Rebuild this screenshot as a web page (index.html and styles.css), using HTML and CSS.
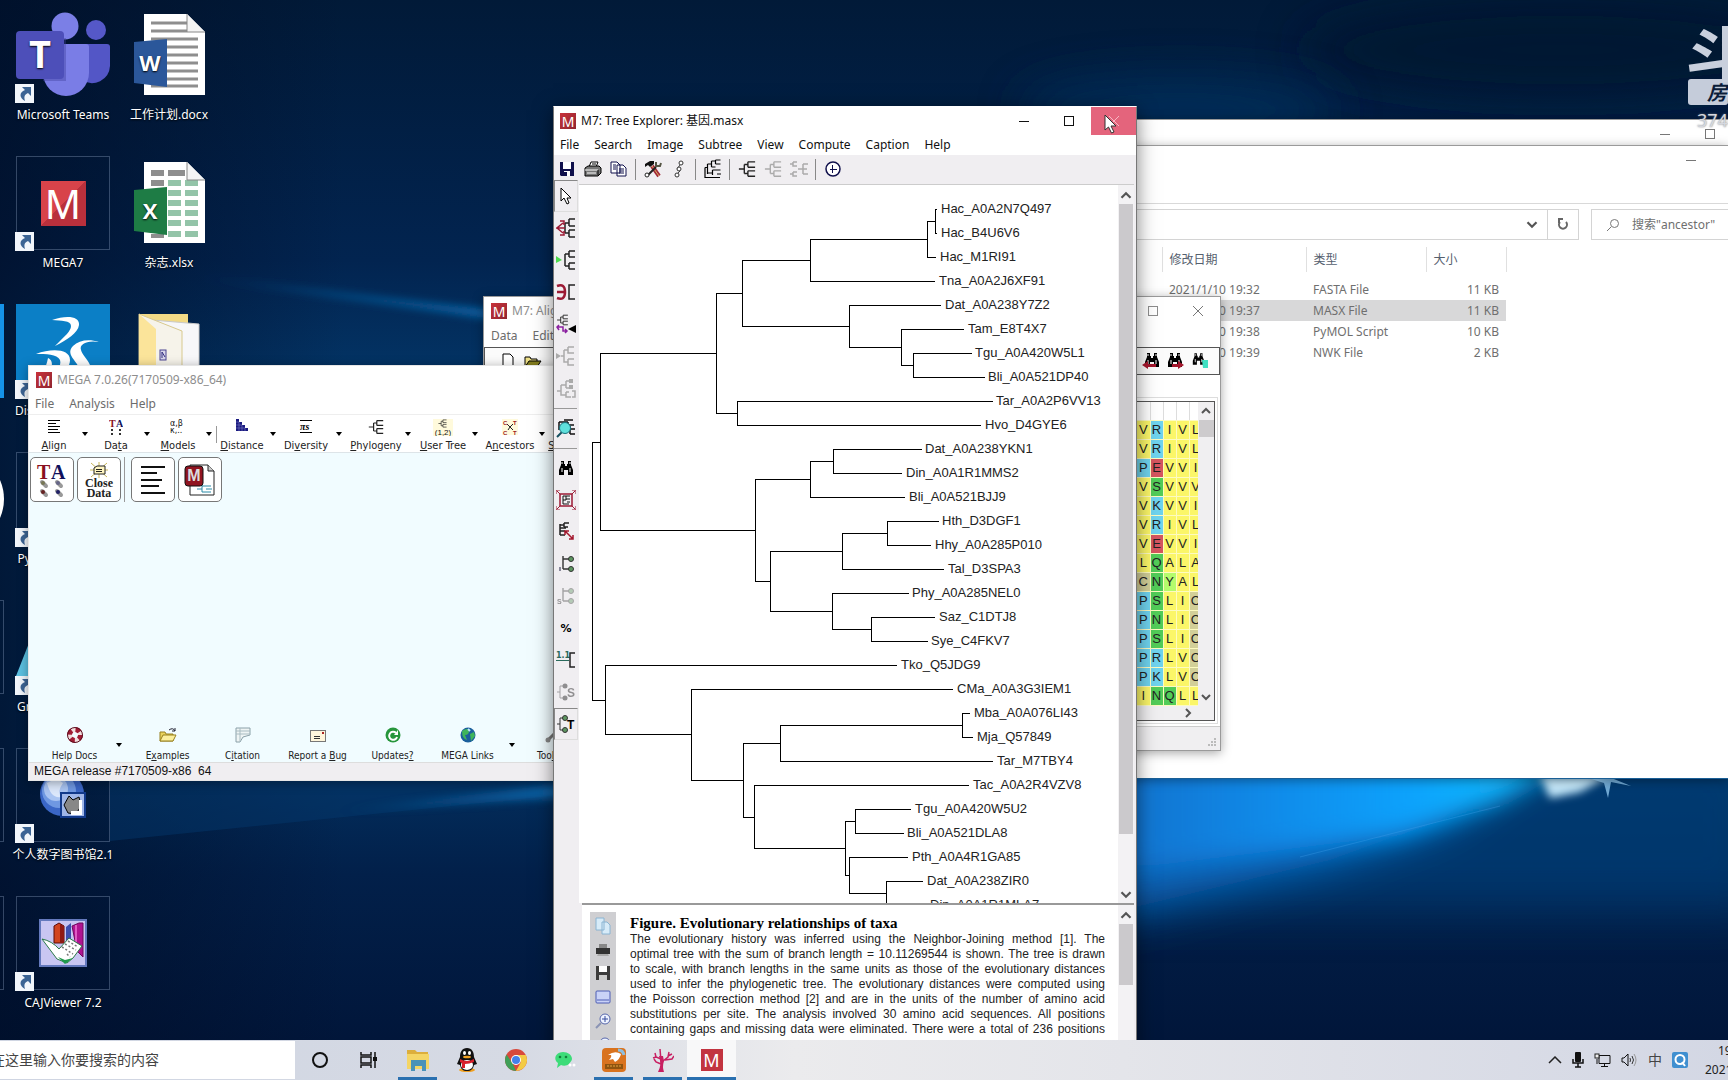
FILE: index.html
```html
<!DOCTYPE html>
<html lang="zh-CN">
<head>
  <meta charset="UTF-8">
  <title>Desktop</title>
  <meta name="viewport" content="width=device-width, initial-scale=1">
  <link rel="stylesheet" href="styles.css">
</head>
<body>

  <!-- shared icons -->
  <svg class="sprite" aria-hidden="true">
    <symbol id="shortcut" viewBox="0 0 19 19"><rect width="19" height="19" fill="#f2f6fb"/><path d="M7 3h9v9l-3-3c-4 2-4 4-3 8-6-3-6-9 0-11z" fill="#3c6494"/></symbol>
    <symbol id="tree" viewBox="0 0 20 20"><path d="M1 10h6M7 5v10M7 5h4M7 15h4M11 2v6M11 2h8M11 8h8M11 12v6M11 12h8M11 18h8" fill="none" stroke="currentColor" stroke-width="1.5"/></symbol>
    <symbol id="binoc" viewBox="0 0 16 16"><path d="M3 1h3v3h1v2h2V4h1V1h3v4l2 5v5h-5v-5H6v5H1v-5l2-5z" fill="#000"/><path d="M4 2v2M12 2v2M4 8v4M12 8v4" stroke="#fff"/></symbol>
    <symbol id="nodes" viewBox="0 0 20 20"><path d="M7 2v8M7 5h6M7 15h6M7 5v10" fill="none" stroke="#333" stroke-width="1.4"/><circle cx="15" cy="5" r="2.5" fill="#5d9660" stroke="#333"/><circle cx="15" cy="15" r="2.5" fill="#5d9660" stroke="#333"/></symbol>
    <symbol id="caret" viewBox="0 0 6 4"><path d="M0 0h6L3 4z" fill="#000"/></symbol>
    <symbol id="up" viewBox="0 0 10 8"><path d="M1 6l4-4 4 4" fill="none" stroke="#555" stroke-width="2"/></symbol>
    <symbol id="down" viewBox="0 0 10 8"><path d="M1 2l4 4 4-4" fill="none" stroke="#555" stroke-width="2"/></symbol>
    <symbol id="right" viewBox="0 0 8 10"><path d="M2 1l4 4-4 4" fill="none" stroke="#555" stroke-width="2"/></symbol>
  </svg>

  <main class="desktop">
    <svg class="wallpaper" viewBox="0 0 1728 1040" preserveAspectRatio="xMaxYMid slice" aria-hidden="true">
      <defs>
        <linearGradient id="sky" x1="0" y1="0" x2="0" y2="1">
          <stop offset="0" stop-color="#011a38"/><stop offset=".25" stop-color="#022450"/><stop offset=".36" stop-color="#033465"/>
          <stop offset=".72" stop-color="#033262"/><stop offset=".84" stop-color="#02204a"/><stop offset="1" stop-color="#01163a"/>
        </linearGradient>
        <linearGradient id="edge" x1="0" x2="1"><stop offset="0" stop-color="#000d26" stop-opacity=".7"/><stop offset=".2" stop-color="#000d26" stop-opacity="0"/></linearGradient>
        <linearGradient id="ray" x1="0" x2="1"><stop offset="0" stop-color="#0b5c9c" stop-opacity="0"/><stop offset=".4" stop-color="#0b5c9c" stop-opacity=".8"/><stop offset="1" stop-color="#1379c4"/></linearGradient>
        <linearGradient id="beam" x1="0" x2="1"><stop offset="0" stop-color="#075aa6"/><stop offset=".5" stop-color="#0b74d2"/><stop offset="1" stop-color="#0c8df0"/></linearGradient>
        <linearGradient id="core" x1="0" x2="1"><stop offset="0" stop-color="#0f86ea" stop-opacity=".4"/><stop offset=".6" stop-color="#10a2fc"/><stop offset="1" stop-color="#14ccff"/></linearGradient>
        <filter id="soft" x="-20%" y="-100%" width="140%" height="300%"><feGaussianBlur stdDeviation="24"/></filter>
        <filter id="mist" x="-20%" y="-100%" width="140%" height="300%"><feGaussianBlur stdDeviation="13"/></filter>
        <filter id="glow" x="-20%" y="-100%" width="140%" height="300%"><feGaussianBlur stdDeviation="4"/></filter>
      </defs>
      <rect width="1728" height="1040" fill="url(#sky)"/>
      <rect width="1728" height="1040" fill="url(#edge)"/>
      <ellipse cx="1560" cy="50" rx="260" ry="50" fill="#01142f" opacity=".7" filter="url(#soft)"/>
      <ellipse cx="1180" cy="110" rx="160" ry="30" fill="#03305e" opacity=".8" filter="url(#soft)"/>
      <path d="M180 275L560 318v10z" fill="url(#ray)" filter="url(#glow)"/>
      <path d="M110 841L560 795V700H110z" fill="#043a6e" opacity=".45"/>
      <path d="M330 812L560 784v14z" fill="url(#ray)" opacity=".7" filter="url(#glow)"/>
      <rect x="1100" y="740" width="660" height="170" fill="#05407a" opacity=".7" filter="url(#soft)"/>
      <path d="M1000 700H1600L1440 820L1330 860L1000 940z" fill="url(#beam)" filter="url(#soft)"/>
      <path d="M1120 740H1600L1500 800L1400 835L1120 870z" fill="url(#core)" filter="url(#mist)"/>
      <path d="M1540 775H1610L1580 792L1550 798z" fill="#c4e8fa" filter="url(#glow)"/>
      <path d="M1585 777h24l22 9-20-4-3 16-4-15z" fill="#9fd8ff" opacity=".7"/>
      <path d="M1300 857L1500 806" stroke="#4aa6f0" opacity=".3"/>
    </svg>

    <section class="icons">
      <div class="icon"></div>
      <div class="icon">
        <svg class="tile" viewBox="0 0 94 94">
          <circle cx="80" cy="22" r="10" fill="#5558c8"/><path d="M66 36h25q3 0 3 3v19a18 18 0 0 1-28 14z" fill="#5356c6"/>
          <circle cx="49" cy="18" r="13.5" fill="#7b7fe6"/><path d="M27 36h43q3 0 3 3v26a23 23 0 0 1-46 0z" fill="#7a7de6"/>
          <path d="M48 30v41H27" fill="none" stroke="#3f3f9c" stroke-width="4" opacity=".4"/><rect y="23" width="48" height="48" rx="4" fill="#4d4fb9"/>
          <text x="24" y="60" class="t-teams">T</text>
        </svg>
        <svg class="short"><use href="#shortcut"/></svg>
        <span>Microsoft Teams</span>
      </div>
      <div class="icon">
        <svg class="tile" viewBox="0 0 94 94">
          <path d="M22 6h43l18 18v63H22z" fill="#fff"/>
          <path d="M29 15h36M29 23h36M29 31h47M29 39h47M29 47h47M29 55h47M29 63h47M29 71h47M29 78h47" stroke="#8e8e8e" stroke-width="3"/>
          <path d="M65 6v18h18" fill="#f4f4f4" stroke="#888"/>
          <path d="M12 34l33-3v48l-33-4z" fill="#2b579a"/><text x="28" y="63" class="t-office">W</text>
        </svg>
        <span>工作计划.docx</span>
      </div>

      <div class="icon"></div>
      <div class="icon">
        <div class="tile framed"><b class="m-logo big">M</b></div>
        <svg class="short"><use href="#shortcut"/></svg>
        <span>MEGA7</span>
      </div>
      <div class="icon">
        <svg class="tile" viewBox="0 0 94 94">
          <path d="M22 6h43l18 18v63H22z" fill="#fff"/>
          <path d="M29 17h13M46 17h17M29 27h13" stroke="#8e8e8e" stroke-width="6"/>
          <path d="M46 27h13M63 27h13M46 37h13M63 37h13M46 47h13M63 47h13M46 57h13M63 57h13M46 67h13M63 67h13M46 78h13M63 78h13" stroke="#93c4a8" stroke-width="6"/>
          <path d="M65 6v18h18" fill="#f4f4f4" stroke="#888"/>
          <path d="M29 80h13" stroke="#8e8e8e" stroke-width="4"/>
          <path d="M12 34l33-3v48l-33-4z" fill="#1e7c45"/><text x="28" y="63" class="t-office">X</text>
        </svg>
        <span>杂志.xlsx</span>
      </div>

      <div class="icon"><div class="tile sky"></div></div>
      <div class="icon">
        <svg class="tile" viewBox="0 0 94 94">
          <rect width="94" height="94" fill="#0b7fc6"/>
          <path d="M36 16c14-5 28-4 27 5-1 8-12 15-24 21 10-10 16-15 16-20 0-6-10-5-19-6z" fill="#fff"/>
          <path d="M83 38c-12-2-20 2-18 8 2 8 16 16 6 24-7 6-18 8-24 6 10-2 18-6 16-12-2-7-14-14-6-22 6-6 16-7 26-4z" fill="#fff"/>
          <path d="M20 50c16-6 34-5 34 6 0 12-18 22-36 24 8-8 12-16 14-26 8 4 2 14-2 20 10-4 16-12 14-18-3-6-14-6-24-6z" fill="#fff"/>
        </svg>
        <svg class="short"><use href="#shortcut"/></svg>
        <span>Discovery Studi...</span>
      </div>
      <div class="icon">
        <svg class="tile" viewBox="0 0 94 94">
          <path d="M17 10h49v84H17z" fill="#f2da86"/><path d="M30 16l47 4v74H36z" fill="#f7f7f9" stroke="#c9c9c9"/>
          <path d="M17 10l43 17v67H17z" fill="#f6f3ea" stroke="#d8c98e"/><path d="M17 10l17 15v69H17z" fill="#fbe49a"/>
          <rect x="38" y="46" width="6" height="10" fill="#d8d6ea" stroke="#4a4590"/><path d="M40 54v-6l3 5" fill="none" stroke="#332e80"/>
        </svg>
      </div>

      <div class="icon"><div class="tile disc"></div></div>
      <div class="icon"><div class="tile framed"></div><svg class="short"><use href="#shortcut"/></svg><span>PyMOL Viewer 2</span></div>
      <div class="icon"></div>

      <div class="icon"><div class="tile framed"></div></div>
      <div class="icon">
        <svg class="tile" viewBox="0 0 94 94"><path d="M0 76L26 10l20 66z" fill="#5cc0e0"/></svg>
        <svg class="short"><use href="#shortcut"/></svg>
        <span>GraphPad Prism</span>
      </div>
      <div class="icon"></div>

      <div class="icon"><div class="tile framed"></div></div>
      <div class="icon">
        <div class="tile framed">
          <svg width="48" height="48" viewBox="0 0 48 48">
            <circle cx="23" cy="23" r="22" fill="#3a66c6"/><circle cx="20" cy="20" r="17" fill="#6f98e2"/><circle cx="17" cy="18" r="12" fill="#a9c4f2"/><path d="M8 12q10-6 16 0-6 8-2 14-10 2-14-14z" fill="#dce8fb"/>
            <rect x="22" y="22" width="24" height="24" fill="#9fb6e8" stroke="#123a8c" stroke-width="2"/>
            <path d="M25 34l5-9 4 4 6-3 2 9-5 8-8-1z" fill="#888" stroke="#000"/><path d="M40 29h3v15H32v-4h8z" fill="#fff"/>
          </svg>
        </div>
        <svg class="short"><use href="#shortcut"/></svg>
        <span>个人数字图书馆2.1</span>
      </div>
      <div class="icon"></div>

      <div class="icon"><div class="tile framed"></div></div>
      <div class="icon">
        <div class="tile framed">
          <svg width="48" height="48" viewBox="0 0 48 48">
            <rect x="1" y="1" width="46" height="46" fill="#c9c6f2" stroke="#6479bd" stroke-width="2"/>
            <path d="M15 7l5-3 5 3v17H15z" fill="#d2451f" stroke="#5a0c08"/><path d="M21 5l4 2v17h-4z" fill="#8f1a14"/>
            <path d="M27 8l5-4v22h-5z" fill="#3c4fb0"/><path d="M33 7l7-3h4v34l-6-6z" fill="#b01391" stroke="#700a5c"/><path d="M37 6v26" stroke="#e05cc4" stroke-width="2"/>
            <path d="M3 20q10 2 17 10l10-11 13 8-9 12-6 5-10-4z" fill="#fff" stroke="#2a7a48"/>
            <path d="M23 28l11 7M26 25l11 6M29 22l10 6M28 35l3 3" stroke="#777" stroke-width="1.5" stroke-dasharray="2 2"/>
            <path d="M19 38l7 3 8-2-8 6z" fill="#1f9a4c"/>
          </svg>
        </div>
        <svg class="short"><use href="#shortcut"/></svg>
        <span>CAJViewer 7.2</span>
      </div>
    </section>

    <!-- file explorer, two windows stacked -->
    <section class="window explorer-back">
      <div class="captions"><button aria-label="最小化"><i class="min"></i></button><button aria-label="最大化"><i class="max"></i></button></div>
    </section>

    <section class="window explorer">
      <div class="captions"><button aria-label="最小化"><i class="min"></i></button></div>
      <div class="address-row">
        <div class="address">
          <button aria-label="历史"><svg width="12" height="9"><use href="#down"/></svg></button>
          <button class="refresh" aria-label="刷新"><svg width="14" height="14" viewBox="0 0 14 14"><path d="M10 4a4 4 0 1 1-6 0M7 1H3v4" fill="none" stroke="#666" stroke-width="2"/></svg></button>
        </div>
        <label class="find">
          <svg width="14" height="14" viewBox="0 0 14 14"><circle cx="8.5" cy="5.5" r="4" fill="none" stroke="#777"/><path d="M5 9l-4 4" stroke="#777"/></svg>
          <input type="text" aria-label="搜索" placeholder='搜索"ancestor"'>
        </label>
      </div>
      <table class="files">
        <thead><tr><th class="c-name"></th><th class="c-date">修改日期</th><th class="c-type">类型</th><th class="c-size">大小</th></tr></thead>
        <tbody>
          <tr><td></td><td>2021/1/10 19:32</td><td>FASTA File</td><td>11 KB</td></tr>
          <tr class="selected"><td></td><td>2021/1/10 19:37</td><td>MASX File</td><td>11 KB</td></tr>
          <tr><td></td><td>2021/1/10 19:38</td><td>PyMOL Script</td><td>10 KB</td></tr>
          <tr><td></td><td>2021/1/10 19:39</td><td>NWK File</td><td>2 KB</td></tr>
        </tbody>
      </table>
    </section>

    <!-- alignment explorer -->
    <section class="window align">
      <header class="title muted">
        <b class="m-logo">M</b><span>M7: Alignment Explorer</span>
        <div class="captions"><button aria-label="Maximize"><i class="max"></i></button><button aria-label="Close"><svg width="12" height="12" viewBox="0 0 12 12"><path d="M1 1l10 10M11 1L1 11" stroke="#777"/></svg></button></div>
      </header>
      <nav class="menu muted"><button>Data</button><button>Edit</button></nav>
      <div class="align-tools">
        <svg width="16" height="16" viewBox="0 0 16 16"><path d="M3 1h7l3 3v11H3z" fill="#fff" stroke="#000"/></svg>
        <svg width="18" height="16" viewBox="0 0 18 16"><path d="M1 14V4h5l1 2h6v3" fill="#f3e58a" stroke="#000"/><path d="M1 14l4-6h12l-4 6z" fill="#8a8420" stroke="#000"/></svg>
        <div class="finders">
          <svg width="18" height="18" viewBox="0 0 18 18"><use href="#binoc" width="16" height="16" x="2"/><path d="M0 13l6-4v3h8v3H6v2z" fill="#a3162c"/></svg>
          <svg width="18" height="18" viewBox="0 0 18 18"><use href="#binoc" width="16" height="16"/><path d="M17 13l-6-4v3H5v3h6v2z" fill="#a3162c"/></svg>
          <svg width="18" height="18" viewBox="0 0 18 18"><use href="#binoc" width="13" height="14"/><path d="M10 8h6v8h-5z" fill="#3fe0c2"/></svg>
        </div>
      </div>
      <div class="grid-frame">
        <div class="grid-box">
          <table class="residues" id="residues"></table>
          <div class="vscroll"><svg width="10" height="8"><use href="#up"/></svg><i class="thumb"></i><svg width="10" height="8"><use href="#down"/></svg></div>
          <div class="hscroll"><svg width="8" height="10"><use href="#right"/></svg></div>
        </div>
      </div>
      <footer class="align-status"><svg width="9" height="9" viewBox="0 0 9 9"><path d="M6 1h2M3 4h2M6 4h2M0 7h2M3 7h2M6 7h2" stroke="#bbb" stroke-width="2"/></svg></footer>
    </section>

    <!-- MEGA main window -->
    <section class="window mega">
      <header class="title muted"><b class="m-logo">M</b><span>MEGA 7.0.26(7170509-x86_64)</span></header>
      <nav class="menu muted"><button>File</button><button>Analysis</button><button>Help</button></nav>
      <div class="mega-tools">
        <button class="tool"><svg width="14" height="14" viewBox="0 0 14 14"><path d="M1 1.5h12M1 4.5h8M1 7.5h12M1 10.5h10M1 13.5h12" stroke="#000"/></svg><span><u>A</u>lign</span></button>
        <svg class="drop"><use href="#caret"/></svg>
        <button class="tool"><svg width="14" height="16" viewBox="0 0 14 16"><text x="0" y="8" class="t-base red">T</text><text x="7" y="8" class="t-base navy">A</text><path d="M3 10v2M3 14v2M11 10v2M11 14v2" stroke="#333" stroke-width="2"/></svg><span>Da<u>t</u>a</span></button>
        <svg class="drop"><use href="#caret"/></svg>
        <button class="tool"><svg width="16" height="16" viewBox="0 0 16 16"><text x="0" y="7" class="t-greek">α,β</text><text x="0" y="14" class="t-greek">κ,..</text></svg><span><u>M</u>odels</span></button>
        <svg class="drop"><use href="#caret"/></svg>
        <i class="sep"></i>
        <button class="tool"><svg width="12" height="12" viewBox="0 0 12 12"><path d="M0 0h3v3h3v3h3v3h3v3H0z" fill="#1b1b80"/><path d="M0 3h3M0 6h6M0 9h9M3 3v9M6 6v6M9 9v3" stroke="#8888cc" stroke-width=".5"/></svg><span><u>D</u>istance</span></button>
        <svg class="drop"><use href="#caret"/></svg>
        <button class="tool mid"><svg width="14" height="14" viewBox="0 0 14 14"><path d="M1 1.5h12M1 13.5h12" stroke="#000"/><text x="1" y="11" class="t-pi">πs</text></svg><span>Di<u>v</u>ersity</span></button>
        <svg class="drop"><use href="#caret"/></svg>
        <button class="tool wide"><svg width="16" height="16"><use href="#tree"/></svg><span><u>P</u>hylogeny</span></button>
        <svg class="drop near"><use href="#caret"/></svg>
        <button class="tool wide pale"><svg width="20" height="17" viewBox="0 0 20 17"><use href="#tree" x="3" width="13" height="9"/><text x="10" y="16" class="t-pair">(1,2)</text></svg><span><u>U</u>ser Tree</span></button>
        <svg class="drop near"><use href="#caret"/></svg>
        <button class="tool wide pale"><svg width="16" height="16" viewBox="0 0 16 16"><path d="M5 5l3 3 3-3M8 8l-2 3M8 8l3 3" fill="none" stroke="#222"/><text x="1" y="6" class="t-tiny">C</text><text x="11" y="6" class="t-tiny">T</text><text x="1" y="16" class="t-tiny">C</text><text x="11" y="16" class="t-tiny">T</text></svg><span>A<u>n</u>cestors</span></button>
        <svg class="drop near"><use href="#caret"/></svg>
        <button class="tool"><span><u>S</u>election</span></button>
      </div>
      <div class="mega-body">
        <div class="cards">
          <button class="card" aria-label="Data explorer"><svg width="34" height="36" viewBox="0 0 34 36"><text x="2" y="17" class="t-card red">T</text><text x="16" y="17" class="t-card navy">A</text><path d="M7 20l4 4M7 29l4 4M22 20l4 4M22 29l4 4" stroke="#999" stroke-width="4" stroke-linecap="round"/><circle cx="8" cy="21" r="2" fill="#775"/><circle cx="8" cy="30" r="2" fill="#622"/><circle cx="23" cy="21" r="2" fill="#668"/><circle cx="23" cy="30" r="2" fill="#226"/></svg></button>
          <button class="card close"><svg width="18" height="16" viewBox="0 0 18 16"><path d="M1 1l16 14M17 1L1 15M9 0v16M0 8h18" stroke="#c9b75a"/><path d="M4 6l3-2h8v8H4z" fill="#fff5c0" stroke="#222"/><path d="M6 7.5h6M6 9.5h6" stroke="#222"/></svg>Close<br>Data</button>
          <i class="card-sep"></i>
          <button class="card" aria-label="Alignment"><svg width="26" height="30" viewBox="0 0 26 30"><path d="M1 2h24M1 8h16M1 15h21M1 21h18M1 28h24" stroke="#111" stroke-width="2"/></svg></button>
          <button class="card" aria-label="Tree"><svg width="32" height="34" viewBox="0 0 32 34"><path d="M6 2h18l6 6v24H6z" fill="#fff" stroke="#222"/><path d="M24 2v6h6" fill="#ccc" stroke="#222"/><rect x="1" y="3" width="18" height="20" rx="3" fill="#8f1420" stroke="#111"/><text x="10" y="18" class="t-doc">M</text><path d="M13 26h5M18 23v6M18 23h9M18 29h9M22 26h6" stroke="#2a8aa6" fill="none"/></svg></button>
        </div>
        <div class="links">
          <button class="link"><svg width="16" height="16" viewBox="0 0 16 16"><circle cx="8" cy="8" r="5.5" fill="none" stroke="#f2dede" stroke-width="5"/><circle cx="8" cy="8" r="5.5" fill="none" stroke="#a01c34" stroke-width="5" stroke-dasharray="4.6 4"/><circle cx="8" cy="8" r="7.5" fill="none" stroke="#5a1020"/></svg><span>Help Docs</span></button>
          <svg class="drop"><use href="#caret"/></svg>
          <button class="link"><svg width="18" height="16" viewBox="0 0 18 16"><path d="M1 14V5h5l1 2h7v7z" fill="#e9d35c" stroke="#97801f"/><path d="M1 14l3-6h13l-3 6z" fill="#fbef9c" stroke="#97801f"/><path d="M10 3q4-3 6 1M16 1v3h-3" fill="none" stroke="#223"/></svg><span>E<u>x</u>amples</span></button>
          <button class="link"><svg width="16" height="16" viewBox="0 0 16 16"><path d="M1 1h14v7l-7 2-3 5H1z" fill="#eef4f4" stroke="#8aa0a8"/><path d="M1 4h14M1 7h14M5 1v13" stroke="#a9bcc2"/></svg><span>C<u>i</u>tation</span></button>
          <button class="link"><svg width="16" height="16" viewBox="0 0 16 16"><rect x=".5" y="3.5" width="15" height="11" fill="#fff6dc" stroke="#777"/><path d="M4 9.500h6M4 11.500h6" stroke="#333"/><path d="M12 5h2v2h-2z" fill="#a22"/></svg><span>Report a <u>B</u>ug</span></button>
          <button class="link"><svg width="16" height="16" viewBox="0 0 16 16"><circle cx="8" cy="8" r="7.5" fill="#27963c"/><path d="M11 6a4 4 0 1 0 1 4" fill="none" stroke="#fff" stroke-width="2"/><path d="M13 3v5H9z" fill="#fff"/></svg><span>Updates<u>?</u></span></button>
          <button class="link"><svg width="16" height="16" viewBox="0 0 16 16"><circle cx="8" cy="8" r="7.5" fill="#1b5f9c"/><path d="M2 4q6-4 7 0 0 4-4 4l2 5Q2 12 2 4zM10 7l4-2 1 4-4 5z" fill="#3fb55a"/><path d="M8 2l2 2" stroke="#bfe7ff" stroke-width="2"/></svg><span>MEGA Links</span></button>
          <svg class="drop"><use href="#caret"/></svg>
          <button class="link slim"><svg width="18" height="16" viewBox="0 0 18 16"><path d="M4 13L13 4" stroke="#777" stroke-width="3"/><circle cx="4" cy="13" r="2.5" fill="#888"/><path d="M12 5V1h5v4z" fill="#999"/></svg><span>Too<u>l</u>bar</span></button>
        </div>
      </div>
      <footer class="mega-status">MEGA release #7170509-x86&nbsp; 64</footer>
    </section>

    <!-- tree explorer, active window -->
    <section class="window tree-win">
      <header class="title">
        <b class="m-logo">M</b><span>M7: Tree Explorer: 基因.masx</span>
        <div class="captions">
          <button aria-label="Minimize"><i class="min"></i></button><button aria-label="Maximize"><i class="max"></i></button>
          <button class="close-btn" aria-label="Close"><svg width="12" height="12" viewBox="0 0 12 12"><path d="M1 1l10 10M11 1L1 11" stroke="#f7b8c4"/></svg></button>
        </div>
      </header>
      <nav class="menu"><button>File</button><button>Search</button><button>Image</button><button>Subtree</button><button>View</button><button>Compute</button><button>Caption</button><button>Help</button></nav>
      <div class="tree-tools">
        <button aria-label="Save"><svg width="16" height="16" viewBox="0 0 16 16"><path d="M1 1h14v14H2l-1-1z" fill="#10104c"/><path d="M4 1h8v7H4zM5 10h6v5H5z" fill="#fff"/><path d="M5 11h3v4H5z" fill="#10104c"/></svg></button>
        <button aria-label="Print"><svg width="18" height="16" viewBox="0 0 18 16"><path d="M5 6l2-5h7l-2 5" fill="#fff" stroke="#000"/><path d="M1 7l3-2h11l2 2v5l-3 3H1z" fill="#777" stroke="#000"/><path d="M1 9h13M3 12h9" stroke="#fff"/><path d="M8 3h4M14 9v5" stroke="#000"/></svg></button>
        <button aria-label="Copy"><svg width="18" height="16" viewBox="0 0 18 16"><path d="M1 1h6l3 3v8H1zM7 4h6l3 3v8H7z" fill="#fff" stroke="#10104c"/><path d="M3 4h3M3 6h3M3 8h3M9 8h5M9 10h5M9 12h5" stroke="#10104c"/></svg></button>
        <i class="bar"></i>
        <button aria-label="Options"><svg width="18" height="18" viewBox="0 0 18 18"><path d="M8 6l7 10" stroke="#a3283a" stroke-width="4"/><path d="M8 6l7 10" stroke="#d8b060"/><path d="M12 7L4 15" stroke="#222" stroke-width="2"/><path d="M1 4l5-3h4v3L6 7 4 5 1 7z" fill="#111"/><path d="M12 2v4h4l1-3" fill="none" stroke="#554" stroke-width="2"/><circle cx="3" cy="15" r="2" fill="#fff" stroke="#222"/></svg></button>
        <button aria-label="Branch"><svg width="10" height="18" viewBox="0 0 10 18"><path d="M6 5L3 9l3 2-3 3" fill="none" stroke="#444"/><circle cx="7" cy="3" r="2" fill="#fff" stroke="#333"/><circle cx="5" cy="9" r="2" fill="#fff" stroke="#333"/><circle cx="3" cy="15" r="2" fill="#fff" stroke="#333"/></svg></button>
        <i class="bar"></i>
        <button aria-label="Topology"><svg width="18" height="20" viewBox="0 0 18 20"><path d="M1 8.500v10h15M3.500 5v10M1 8.500h3M3.500 5h4M7.500 2v6M7.500 2h4M7.500 8h4M3.500 14h5M11.500 1v4M11.500 1h5M11.500 5h5M8.500 11v5M8.500 11h8M13 15h4" fill="none" stroke="#000" stroke-width="1.2"/></svg></button>
        <i class="bar"></i>
        <button aria-label="Root"><svg width="18" height="18"><use href="#tree"/></svg></button>
        <button class="dim" aria-label="Subtree"><svg width="18" height="18"><use href="#tree"/></svg></button>
        <button class="dim" aria-label="Swap"><svg width="18" height="18" viewBox="0 0 18 18"><path d="M0 4h3M3 2v4h4M3 2h4M0 14h3M3 12v4h4M3 12h4M8 9h5M13 4v10M13 4h5M13 14h5M13 9h4" fill="none" stroke="currentColor" stroke-width="1.5"/></svg></button>
        <i class="bar"></i>
        <button aria-label="Time"><svg width="16" height="16" viewBox="0 0 16 16"><circle cx="8" cy="8" r="7" fill="#fff" stroke="#10104c" stroke-width="1.5"/><path d="M7.500 4v8M5 8.500h7" stroke="#10104c"/></svg></button>
      </div>
      <div class="tree-main">
        <div class="side">
          <button class="pressed" aria-label="Pointer"><svg width="12" height="18" viewBox="0 0 12 18"><path d="M1 1v13l3-3 3 6 2-1-2-5h4z" fill="#fff" stroke="#000"/></svg></button>
          <button aria-label="Place root"><svg width="20" height="20" viewBox="0 0 20 20"><path d="M9 5v10M9 5h4M9 15h4M13 1v7M13 1h6M13 8h6M13 12v7M13 12h6M13 19h6" fill="none" stroke="#222" stroke-width="1.5"/><path d="M9 10H1l6-5M1 10l6 5M4 3h4v4M4 17h4v-4" fill="none" stroke="#9c1a34" stroke-width="1.5"/></svg></button>
          <button aria-label="Flip"><svg width="20" height="20" viewBox="0 0 20 20"><path d="M0 6l6 4-6 3z" fill="#4fdc4f"/><path d="M9 4v12M9 4h4M9 16h4M13 1v6M13 1h6M13 7h6M13 13v6M13 13h6M13 19h6" fill="none" stroke="#222" stroke-width="1.5"/></svg></button>
          <button aria-label="Swap"><svg width="20" height="20" viewBox="0 0 20 20"><path d="M1 4q8-3 8 6t-8 6M1 10h9" fill="none" stroke="#9c1a34" stroke-width="2.5"/><path d="M19 3h-6v14h6" fill="none" stroke="#222" stroke-width="1.5"/></svg></button>
          <button aria-label="Compress"><svg width="20" height="20" viewBox="0 0 20 20"><use href="#tree" width="13" height="12"/><path d="M1 13h6v4h4M3 11l-2 2 2 3M9 15l2 2-2 2" fill="none" stroke="#8a1fa0" stroke-width="1.5"/><path d="M20 11v8l-8-4z" fill="#000"/></svg></button>
          <button class="dim" aria-label="Subtree"><svg width="20" height="20" viewBox="0 0 20 20"><path d="M0 7l5 3-5 3z" fill="currentColor"/><path d="M5 10h3M8 4v12h4M8 4h4M12 1v6h6M12 1h6M12 13v6h6M12 13h6" fill="none" stroke="currentColor" stroke-width="1.5"/></svg></button>
          <button class="dim" aria-label="Expand"><svg width="20" height="20" viewBox="0 0 20 20"><path d="M1 13h4M5 7v10h5M5 7h5M10 3v7M10 3h4M10 10h4M10 14v5h5M10 14h3M16 13h3v6h-3" fill="none" stroke="currentColor" stroke-width="1.5"/><path d="M13 1h4v4h-4zM13 7h4v4h-4z" fill="currentColor"/></svg></button>
          <hr>
          <button aria-label="Zoom subtree"><svg width="20" height="20" viewBox="0 0 20 20"><path d="M3 4h9M3 4v8M8 2h9M12 4v3h6M14 8v8M14 11h5M14 16h5" stroke="#111" stroke-width="1.5" fill="none"/><path d="M1 19l5-5" stroke="#134f5f" stroke-width="2"/><circle cx="9" cy="10" r="5.5" fill="#5fe0dc" stroke="#18707c"/></svg></button>
          <hr>
          <button aria-label="Find"><svg width="16" height="16"><use href="#binoc"/></svg></button>
          <button aria-label="Fit"><svg width="20" height="20" viewBox="0 0 20 20"><rect x="4" y="4" width="12" height="12" fill="none" stroke="#9c1a34" stroke-width="1.5"/><path d="M1 1l3 3M19 1l-3 3M1 19l3-3M19 19l-3-3M0 4V0h4M16 0h4v4M0 16v4h4M20 16v4h-4" stroke="#9c1a34" fill="none"/><path d="M7 6v8M7 6h3M7 10h3M7 14h6M10 6v4M10 6h4M10 9h4M11 12h3" fill="none" stroke="#111"/></svg></button>
          <button aria-label="Resize"><svg width="20" height="20" viewBox="0 0 20 20"><path d="M4 2v11M4 3h4M4 6h6M4 9h5M4 13h5M8 1v4M8 1h5M8 5h4" stroke="#222" stroke-width="1.5"/><path d="M9 9l8 8M9 13V9h4M17 13v4h-4" stroke="#a3162c" stroke-width="1.5" fill="none"/></svg></button>
          <button aria-label="Node ids"><svg width="20" height="20" viewBox="0 0 20 20"><use href="#nodes"/><path d="M4 13v4" stroke="#224"/></svg></button>
          <button class="faded" aria-label="Statistics"><svg width="20" height="20" viewBox="0 0 20 20"><use href="#nodes"/><text x="1" y="18" class="t-tag">S</text></svg></button>
          <button class="pct">%</button>
          <button aria-label="Branch lengths"><svg width="20" height="20" viewBox="0 0 20 20"><text x="0" y="8" class="t-len">1.1</text><path d="M0 10.500h13" stroke="#2a6a5c"/><path d="M19 3h-5v14h5" fill="none" stroke="#222" stroke-width="1.5"/></svg></button>
          <button class="faded" aria-label="Node stats"><svg width="20" height="20" viewBox="0 0 20 20"><path d="M1 10h3M4 4v12h5M4 4h5" stroke="#333" fill="none"/><circle cx="9" cy="4" r="2.5"/><circle cx="9" cy="16" r="2.5"/><text x="11" y="15" class="t-mark">S</text></svg></button>
          <button class="pressed" aria-label="Taxa names"><svg width="20" height="20" viewBox="0 0 20 20"><path d="M1 10h3M4 4v12h5M4 4h5" stroke="#333" fill="none"/><circle cx="9" cy="4" r="2.5" fill="#5d9660" stroke="#333"/><circle cx="9" cy="16" r="2.5" fill="#5d9660" stroke="#333"/><text x="11" y="15" class="t-mark">T</text></svg></button>
        </div>
        <div class="panes">
          <div class="tree-pane">
            <svg class="phylo" id="phylo" width="539" height="718" viewBox="579 186 539 718"></svg>
            <div class="scroll"><svg width="12" height="9"><use href="#up"/></svg><i class="thumb"></i><svg width="12" height="9"><use href="#down"/></svg></div>
          </div>
          <div class="caption-pane">
            <div class="caption-tools">
              <svg width="18" height="18" viewBox="0 0 18 18"><path d="M2 1h8v12H2zM8 5h5l3 3v9H8z" fill="#d7ebf8" stroke="#8ab4d2"/></svg>
              <svg width="16" height="14" viewBox="0 0 16 14"><path d="M4 1h8v4H4z" fill="#888"/><path d="M1 5h14v6H1z" fill="#333"/><path d="M3 11h10l1 2H2z" fill="#aaa"/></svg>
              <svg width="16" height="16" viewBox="0 0 16 16"><path d="M1 1h14v14H1z" fill="#3c3c3c"/><path d="M4 1h8v6H4z" fill="#fff"/><path d="M4 10h8v5H4z" fill="#ccc"/></svg>
              <svg width="16" height="16" viewBox="0 0 16 16"><rect x="1" y="2" width="14" height="12" rx="1" fill="#c9d2f7" stroke="#4c5cb4"/><path d="M2 11h12" stroke="#4c5cb4"/></svg>
              <svg width="16" height="16" viewBox="0 0 16 16"><circle cx="10" cy="6" r="5" fill="#eef3ff" stroke="#5767ab"/><path d="M7 6h6M10 3v6" stroke="#344a9c"/><path d="M6 10l-5 5" stroke="#8a93b4" stroke-width="2"/></svg>
              <svg width="16" height="16" viewBox="0 0 16 16"><circle cx="10" cy="6" r="5" fill="#eef3ff" stroke="#5767ab"/></svg>
            </div>
            <article class="caption">
              <h1>Figure. Evolutionary relationships of taxa</h1>
              <p>The evolutionary history was inferred using the Neighbor-Joining method [1]. The</p>
              <p>optimal tree with the sum of branch length = 10.11269544 is shown. The tree is drawn</p>
              <p>to scale, with branch lengths in the same units as those of the evolutionary distances</p>
              <p>used to infer the phylogenetic tree. The evolutionary distances were computed using</p>
              <p>the Poisson correction method [2] and are in the units of the number of amino acid</p>
              <p>substitutions per site. The analysis involved 30 amino acid sequences. All positions</p>
              <p>containing gaps and missing data were eliminated. There were a total of 236 positions</p>
            </article>
            <div class="scroll short-thumb"><svg width="12" height="9"><use href="#up"/></svg><i class="thumb"></i></div>
          </div>
        </div>
      </div>
    </section>

    <div class="watermark"><b>斗鱼</b><em>房间号</em><span>3740</span></div>
    <svg class="pointer" width="13" height="20" viewBox="0 0 13 20"><path d="M1 1v15l3.5-3 3 6 2.5-1-3-6h5z" fill="#fff" stroke="#333"/></svg>
  </main>

  <footer class="taskbar">
    <input class="search" type="text" aria-label="搜索" placeholder="在这里输入你要搜索的内容">
    <button class="task" aria-label="Cortana"><svg width="18" height="18" viewBox="0 0 18 18"><circle cx="9" cy="9" r="7" fill="none" stroke="#111" stroke-width="2"/></svg></button>
    <button class="task" aria-label="任务视图"><svg width="18" height="16" viewBox="0 0 18 16"><path d="M1 0v3h10V0M1 16v-3h10v3M1 5h10v6H1zM15 0v16" fill="none" stroke="#111" stroke-width="1.5"/><rect x="13" y="5" width="4" height="4" fill="#111"/></svg></button>
    <button class="task open" aria-label="文件资源管理器"><svg width="24" height="22" viewBox="0 0 24 22"><path d="M1 1h8l2 2h11v4H1z" fill="#dcae3c"/><path d="M1 5h22v15H1z" fill="#f4d565"/><path d="M5 11h15v11h-4v-5H9v5H5z" fill="#4a92b8"/></svg></button>
    <button class="task" aria-label="QQ"><svg width="22" height="24" viewBox="0 0 22 24"><ellipse cx="11" cy="22" rx="8" ry="2" fill="#f0a020"/><path d="M11 0c5 0 7 4 7 9l3 7-3 1c-1 4-3 6-7 6s-6-2-7-6l-3-1 3-7c0-5 2-9 7-9z" fill="#111"/><ellipse cx="11" cy="17" rx="6" ry="5" fill="#fff"/><ellipse cx="8.5" cy="5" rx="1.5" ry="2" fill="#fff"/><ellipse cx="13.5" cy="5" rx="1.5" ry="2" fill="#fff"/><ellipse cx="11" cy="9" rx="4" ry="1.3" fill="#f0a020"/><path d="M4 11q7 4 14 0v3q-5 2-9 2v4H6v-5l-2-1z" fill="#d8202c"/></svg></button>
    <button class="task" aria-label="Chrome"><svg width="22" height="22" viewBox="0 0 22 22"><circle cx="11" cy="11" r="11" fill="#d8493c"/><path d="M1.5 5.5L8 15l3 7A11 11 0 0 1 1.500 5.500z" fill="#3f9f58"/><path d="M20.800 6H11l5 7-5 9A11 11 0 0 0 20.800 6z" fill="#f3cb45"/><circle cx="11" cy="11" r="5" fill="#fff"/><circle cx="11" cy="11" r="4" fill="#4381ea"/></svg></button>
    <button class="task" aria-label="微信"><svg width="22" height="18" viewBox="0 0 22 18"><path d="M9 1c5 0 9 3 9 7 0 2-2 3-3 5-2 2-6 2-8 1l-4 3 1-5C-2 7 3 1 9 1z" fill="#3ddc79"/><circle cx="6" cy="6" r="1.3" fill="#14803c"/><circle cx="12" cy="6" r="1.3" fill="#14803c"/><circle cx="16" cy="14" r="1.5" fill="#fff"/><circle cx="20" cy="14" r="1.5" fill="#fff"/></svg></button>
    <button class="task open" aria-label="斗鱼直播"><svg width="24" height="24" viewBox="0 0 24 24"><rect width="24" height="24" rx="4" fill="#d9731f"/><path d="M6 7q7-5 13-1-1 5-6 8l-2-3-4 1q3-3 2-5z" fill="#fff"/><path d="M16 2q5 0 6 5" stroke="#8dbfe0" stroke-width="3" fill="none"/><path d="M3 16h18v5H3z" fill="#8f5410"/><path d="M5 18h14" stroke="#e8a13c" stroke-dasharray="2 1"/></svg></button>
    <button class="task open" aria-label="进化树"><svg width="22" height="24" viewBox="0 0 22 24"><path d="M9 13L8 1M9 11L4 9 3 5M4 9L1 10M11 13l5-4 1-5M13 12l7-1 2-3M9 16l-5-2-2-3M16 8l4-2" fill="none" stroke="#c81f62" stroke-width="1.5"/><path d="M6 24q4-7 1-16h4l1 5q-2 6 0 11z" fill="#c81f62"/></svg></button>
    <button class="task open active" aria-label="MEGA7"><b class="m-logo task-m">M</b></button>
    <div class="tray">
      <svg width="14" height="8" viewBox="0 0 14 8"><path d="M1 7l6-6 6 6" fill="none" stroke="#222" stroke-width="1.5"/></svg>
      <svg width="12" height="16" viewBox="0 0 12 16"><rect x="3" width="6" height="10" rx="1" fill="#111"/><path d="M1 7v4h10V7M6 11v4M3 15h6" fill="none" stroke="#111" stroke-width="1.5"/></svg>
      <svg width="17" height="14" viewBox="0 0 17 14"><path d="M5 2.500h11v8H5zM7 13.500h7M10.500 11v2M3 6v5" fill="none" stroke="#111"/><rect x="1" y="1" width="4" height="4" fill="#eee" stroke="#222"/></svg>
      <svg width="17" height="14" viewBox="0 0 17 14"><path d="M1 5h2l4-4v12L3 9H1z" fill="none" stroke="#111"/><path d="M9 5q1 2 0 4M11 3q3 4 0 8" fill="none" stroke="#333"/><path d="M13 1q4 6 0 12" fill="none" stroke="#999"/></svg>
      <span class="ime">中</span>
      <svg width="16" height="16" viewBox="0 0 16 16"><rect width="16" height="16" rx="2" fill="#3f8fd0"/><circle cx="8" cy="7.5" r="4.5" fill="none" stroke="#fff" stroke-width="2"/><path d="M10 10l3 4" stroke="#fff" stroke-width="2"/></svg>
      <time class="clock"><span>19:42</span><span>2021/1/10</span></time>
    </div>
  </footer>

  <script>
    // leaf: label, label x, line start, line end (24px between rows)
    const leaves = [
      ['Hac_A0A2N7Q497', 941, 935, 937], ['Hac_B4U6V6', 941, 935, 937], ['Hac_M1RI91', 940, 927, 936],
      ['Tna_A0A2J6XF91', 939, 810, 935], ['Dat_A0A238Y7Z2', 945, 849, 941], ['Tam_E8T4X7', 968, 901, 964],
      ['Tgu_A0A420W5L1', 975, 913, 972], ['Bli_A0A521DP40', 988, 913, 985], ['Tar_A0A2P6VV13', 996, 737, 993],
      ['Hvo_D4GYE6', 985, 737, 981], ['Dat_A0A238YKN1', 925, 833, 922], ['Din_A0A1R1MMS2', 906, 833, 902],
      ['Bli_A0A521BJJ9', 909, 810, 905], ['Hth_D3DGF1', 942, 887, 939], ['Hhy_A0A285P010', 935, 887, 931],
      ['Tal_D3SPA3', 948, 842, 944], ['Phy_A0A285NEL0', 912, 832, 909], ['Saz_C1DTJ8', 939, 871, 935],
      ['Sye_C4FKV7', 931, 871, 928], ['Tko_Q5JDG9', 901, 605, 897], ['CMa_A0A3G3IEM1', 957, 691, 953],
      ['Mba_A0A076LI43', 974, 962, 970], ['Mja_Q57849', 977, 962, 973], ['Tar_M7TBY4', 997, 780, 993],
      ['Tac_A0A2R4VZV8', 973, 754, 969], ['Tgu_A0A420W5U2', 915, 855, 911], ['Bli_A0A521DLA8', 907, 855, 904],
      ['Pth_A0A4R1GA85', 912, 849, 908], ['Dat_A0A238ZIR0', 927, 886, 923], ['Din_A0A1R1MLA7', 930, 886, 926]
    ];
    // node: x, top, bottom, parent x, y of the stem
    const nodes = [
      [935, 210, 234, 927, 222], [927, 222, 258, 810, 240], [810, 240, 282, 742, 261], [742, 261, 327, 716, 294],
      [849, 306, 348, 742, 327], [901, 330, 366, 849, 348], [913, 354, 378, 901, 366], [716, 294, 414, 600, 354],
      [737, 402, 426, 716, 414], [600, 354, 531, 592, 443], [755, 480, 582, 600, 531], [810, 462, 498, 755, 480],
      [833, 450, 474, 810, 462], [770, 552, 612, 755, 582], [842, 534, 570, 770, 552], [887, 522, 546, 842, 534],
      [832, 594, 630, 770, 612], [871, 618, 642, 832, 630], [592, 443, 701, 592, 443], [605, 666, 735, 592, 701],
      [691, 690, 781, 605, 735], [743, 744, 818, 691, 781], [780, 726, 762, 743, 744], [962, 714, 738, 780, 726],
      [754, 786, 849, 743, 818], [845, 822, 876, 754, 849], [855, 810, 834, 845, 822], [849, 858, 894, 845, 876],
      [886, 882, 906, 849, 894]
    ];
    let d = '', labels = '';
    leaves.forEach(([name, x, from, to], i) => {
      const y = 210 + i * 24;
      d += `M${from} ${y}H${to}`;
      labels += `<text x="${x}" y="${y + 4}">${name}</text>`;
    });
    nodes.forEach(([x, top, bottom, parent, y]) => {
      d += `M${x} ${top}V${bottom}M${parent} ${y}H${x}`;
    });
    document.getElementById('phylo').innerHTML = `<path d="${d}"/>${labels}`;

    // one string per sequence row
    const rows = ['VRIVL', 'VRIVL', 'PEVVI', 'VSVVV', 'VKVVI', 'VRIVL', 'VEVVI', 'LQALA', 'CNYAL', 'PSLIC', 'PNLIC', 'PSLIC', 'PRLVC', 'PKLVC', 'INQLL'];
    const cells = row => [...row].map(c => `<td class="aa-${c}">${c}</td>`).join('');
    document.getElementById('residues').innerHTML =
      '<tr class="head">' + '<td></td>'.repeat(5) + '</tr>' + rows.map(r => `<tr>${cells(r)}</tr>`).join('');
  </script>

</body>
</html>
```
FILE: styles.css
```css
* {
  box-sizing: border-box;
}

body {
  margin: 0;
  height: 100vh;
  display: flex;
  flex-direction: column;
  overflow: hidden;
  font-family: "Noto Sans", "Noto Sans CJK SC", sans-serif;
  font-size: 12px;
  line-height: 16px;
  color: #222;
}

button {
  font: inherit;
  color: inherit;
  background: none;
  border: 0;
  padding: 0;
  display: flex;
  align-items: center;
  justify-content: center;
}

input {
  font: inherit;
  border: 0;
  background: none;
  padding: 0;
  min-width: 0;
}

svg {
  display: block;
  flex: none;
}

.sprite {
  position: absolute;
  width: 0;
  height: 0;
}

.desktop {
  position: relative;
  flex: 1;
  min-height: 0;
  overflow: hidden;
  background: #02204a;
}

.wallpaper {
  position: absolute;
  width: 100%;
  height: 100%;
}

/* desktop icons */

.icons {
  position: absolute;
  left: -96px;
  top: 8px;
  display: grid;
  grid-template-columns: repeat(3, 106px);
  grid-auto-rows: 148px;
}

.icon {
  position: relative;
  display: flex;
  flex-direction: column;
  align-items: center;
  gap: 3px;
  color: #fff;
  font-size: 12px;
  line-height: 20px;
  white-space: nowrap;
  text-shadow: 0 1px 2px #000;
}

.tile {
  width: 94px;
  height: 94px;
  flex: none;
  display: flex;
  align-items: center;
  justify-content: center;
}

.framed {
  border: 1px solid rgba(150, 170, 200, 0.35);
}

.sky {
  background: #1593e8;
}

.disc {
  border-radius: 50%;
  background: #fff;
}

.short {
  position: absolute;
  left: 5px;
  top: 76px;
  width: 19px;
  height: 19px;
}

.m-logo {
  width: 16px;
  height: 16px;
  flex: none;
  display: flex;
  align-items: center;
  justify-content: center;
  background: linear-gradient(135deg, #c8323a, #8f2530);
  color: #fff;
  font: 14px "Noto Sans", sans-serif;
  text-shadow: none;
}

.m-logo.big {
  width: 45px;
  height: 45px;
  font-size: 40px;
  background: linear-gradient(135deg, #d8434a 50%, #b9303c 50%);
}

.m-logo.task-m {
  width: 22px;
  height: 22px;
  font-size: 18px;
  background: #c23440;
}

.t-teams {
  font: bold 38px "Open Sans", sans-serif;
  fill: #fff;
  text-anchor: middle;
}

.t-office {
  font: bold 22px "Open Sans", sans-serif;
  fill: #fff;
  text-anchor: middle;
}

.t-base { font: bold 10px "Liberation Serif", serif; }
.t-card { font: bold 20px "Liberation Serif", serif; }
.red { fill: #8a1020; }
.navy { fill: #10105c; }
.t-greek { font: 8px "DejaVu Sans", sans-serif; fill: #111; }
.t-pair { font: 8px "Liberation Sans", sans-serif; fill: #111; text-anchor: middle; }
.t-pi { font: italic bold 10px "Liberation Serif", serif; }
.t-tiny { font: bold 6px "Liberation Sans", sans-serif; fill: #a01c20; }
.t-doc { font: bold 16px "Liberation Sans", sans-serif; fill: #ddd; text-anchor: middle; }
.t-tag { font: bold 7px "Liberation Sans", sans-serif; }
.t-len { font: bold 8px "DejaVu Sans", sans-serif; fill: #2a6a5c; }
.t-mark { font: bold 12px "Liberation Sans", sans-serif; }

/* windows */

.window {
  position: absolute;
  background: #fff;
  border: 1px solid #9a9a9a;
  box-shadow: 0 2px 10px rgba(0, 0, 0, 0.35);
  display: flex;
  flex-direction: column;
}

.title {
  height: 28px;
  flex: none;
  display: flex;
  align-items: center;
  gap: 5px;
  padding-left: 7px;
  color: #111;
  white-space: nowrap;
}

.menu {
  height: 21px;
  flex: none;
  display: flex;
  align-items: center;
  gap: 15px;
  padding-left: 7px;
  color: #111;
}

.title.muted {
  color: #8d8d8d;
}

.menu.muted {
  color: #6c6c6c;
}

.captions {
  margin-left: auto;
  display: flex;
  align-self: stretch;
}

.captions button {
  width: 45px;
}

.min {
  width: 10px;
  height: 1px;
  background: currentColor;
}

.max {
  width: 10px;
  height: 10px;
  border: 1px solid currentColor;
}

.explorer-back,
.explorer {
  border-right: 0;
  color: #777;
}

.explorer-back {
  left: 660px;
  right: 0;
  top: 119px;
  height: 500px;
}

.explorer-back .captions {
  height: 28px;
  margin-right: -4px;
}

.explorer {
  left: 639px;
  right: 0;
  top: 145px;
  height: 634px;
  border-bottom-color: #1a5f96;
}

.explorer .captions {
  height: 57px;
  align-self: flex-end;
  margin-right: 15px;
  padding-bottom: 28px;
}

.address-row {
  display: flex;
  gap: 12px;
  padding-top: 5px;
  border-top: 1px solid #d9d9d9;
}

.address {
  flex: 1;
  height: 31px;
  border: 1px solid #d4d4d4;
  display: flex;
  justify-content: flex-end;
}

.address button {
  width: 30px;
}

.address .refresh {
  width: 31px;
  border-left: 1px solid #d4d4d4;
}

.find {
  width: 137px;
  height: 31px;
  border: 1px solid #d4d4d4;
  border-right: 0;
  display: flex;
  align-items: center;
  gap: 12px;
  padding-left: 14px;
}

.find input {
  width: 100px;
}

.find input::placeholder {
  color: #6f6f6f;
  opacity: 1;
}

.files {
  table-layout: fixed;
  width: 866px;
  margin-top: 7px;
  border-collapse: collapse;
  color: #6f6f6f;
}

.files th {
  height: 25px;
  padding: 0 7px;
  font-weight: normal;
  text-align: left;
  color: #55606e;
  border-right: 1px solid #e0e0e0;
}

.c-name { width: 522px; }
.c-date { width: 144px; }
.c-type { width: 120px; }
.c-size { width: 80px; }

.files tbody::before {
  content: "";
  display: block;
  height: 7px;
}

.files td {
  height: 21px;
  padding: 0 7px;
}

.files td:last-child {
  text-align: right;
}

.selected td {
  background: #d8d8d9;
}

/* alignment explorer */

.align {
  left: 483px;
  top: 296px;
  width: 738px;
}

.align-tools {
  height: 28px;
  margin-top: 1px;
  display: flex;
  align-items: center;
  gap: 8px;
  padding-left: 15px;
  border: 1px solid #555;
  background: #fbfbfb;
}

.finders {
  margin-left: auto;
  margin-right: 9px;
  display: flex;
  gap: 7px;
}

.grid-frame {
  margin: 22px 2px 2px;
  padding: 3px 2px 2px 0;
  border: 1px solid #ddd;
}

.grid-box {
  border: 1px solid #555;
  display: grid;
  grid-template-columns: 1fr 61px 16px;
  background: #f0eff1;
}

.residues {
  grid-column: 2;
  table-layout: fixed;
  width: 61px;
  border-collapse: collapse;
  overflow: hidden;
  display: block;
  font: 13px "Liberation Sans", Arial, sans-serif;
  color: #222;
}

.residues td {
  width: 13px;
  min-width: 13px;
  height: 19px;
  padding: 0;
  text-align: center;
  background: #fbf668;
  border-right: 1px solid #fdfbc0;
  border-bottom: 1px solid #fdfbc0;
}

.residues .head td {
  height: 18px;
  background: #fff;
  border-right-color: #ddd;
}

.residues .aa-R, .residues .aa-K, .residues .aa-P { background: #6fd3ee; }
.residues .aa-E { background: #d5555f; }
.residues .aa-S, .residues .aa-N, .residues .aa-Q { background: #52cc58; }
.residues .aa-C { background: #d2cf98; }
.residues .aa-Y { background: #b4fb6c; }

.vscroll {
  display: flex;
  flex-direction: column;
  align-items: center;
  padding: 5px 0;
}

.vscroll .thumb {
  width: 15px;
  height: 17px;
  margin: 5px 0 auto;
  background: #cdcbcd;
}

.hscroll {
  grid-column: 1 / -1;
  height: 14px;
  display: flex;
  align-items: center;
  justify-content: flex-end;
  padding-right: 22px;
}

.align-status {
  height: 24px;
  background: #f0eff1;
  border-top: 1px solid #ccc;
  display: flex;
  align-items: flex-end;
  justify-content: flex-end;
  padding: 3px;
}

/* MEGA main window */

.mega {
  left: 28px;
  top: 365px;
  width: 580px;
  border-color: #e6e6e6;
}

.mega .menu {
  height: 20px;
  padding-left: 6px;
}

.mega-tools {
  height: 39px;
  display: flex;
  gap: 1px;
  padding: 4px 0 0 1px;
  border-top: 1px solid #eee;
  border-bottom: 1px solid #dde4e8;
  font: 11px "DejaVu Sans Condensed", "DejaVu Sans", sans-serif;
}

.tool {
  width: 48px;
  flex: none;
  flex-direction: column;
  justify-content: space-between;
  white-space: nowrap;
}

.tool span {
  margin-top: auto;
}

.tool.mid {
  width: 52px;
}

.tool.wide {
  width: 54px;
  margin-left: 3px;
}

.tool.pale svg {
  background: #fffadc;
}

.drop {
  width: 12px;
  height: 4px;
  margin-top: 13px;
}

.drop.near {
  width: 8px;
}

.sep {
  width: 1px;
  height: 17px;
  margin-top: 7px;
  background: #999;
}

.mega-body {
  height: 309px;
  display: flex;
  flex-direction: column;
  justify-content: space-between;
  background: #f1fcff;
}

.cards {
  display: flex;
  gap: 3px;
  padding: 4px 1px;
}

.card {
  width: 44px;
  height: 45px;
  border: 1px solid #777;
  border-radius: 5px;
  background: #fff;
}

.card.close {
  flex-direction: column;
  font: bold 12px/10px "Liberation Serif", serif;
}

.card-sep {
  width: 1px;
  margin-right: 3px;
  background: #999;
}

.links {
  display: flex;
  height: 35px;
  padding: 0 0 1px 8px;
  font: 10px "DejaVu Sans Condensed", "DejaVu Sans", sans-serif;
}

.link {
  width: 75px;
  flex: none;
  flex-direction: column;
  justify-content: space-between;
  white-space: nowrap;
}

.link.slim {
  width: 60px;
}

.links .drop {
  width: 14px;
  margin-top: 16px;
}

.links .drop + .link {
  margin-left: 4px;
}

.mega-status {
  height: 18px;
  padding-left: 5px;
  background: #f0eef1;
  border-top: 1px solid #ddd;
  font: 12px/17px "Liberation Sans", Arial, sans-serif;
  color: #111;
}

/* tree explorer */

.tree-win {
  left: 553px;
  top: 106px;
  width: 584px;
  background: #f0eef1;
  border-color: #777;
  border-top-color: #fff;
  box-shadow: 0 4px 18px rgba(0, 0, 0, 0.5);
}

.tree-win .title,
.tree-win .menu {
  background: #fff;
}

.tree-win .title {
  padding-left: 6px;
}

.tree-win .menu {
  height: 20px;
  padding-left: 6px;
}

.tree-win .close-btn {
  background: #e4647c;
}

.tree-tools {
  height: 25px;
  display: flex;
  align-items: center;
  gap: 7px;
  padding: 3px 0 0 3px;
}

.tree-tools button {
  width: 19px;
}

.bar {
  width: 1px;
  height: 21px;
  background: #888;
}

.dim {
  color: #aaa;
}

.faded {
  opacity: 0.4;
}

.tree-main {
  display: flex;
}

.side {
  width: 25px;
  flex: none;
}

.side button {
  width: 24px;
  height: 32px;
}

.side hr {
  height: 1px;
  margin: 4px 2px 3px 0;
  border: 0;
  background: #999;
}

.side .pressed {
  border: 1px solid #888;
  border-right-color: #ddd;
  border-bottom-color: #ddd;
}

.side .pct {
  font: bold 11px "DejaVu Sans", sans-serif;
  color: #000;
}

.panes {
  flex: 1;
  padding: 4px 2px 0 0;
  min-width: 0;
}

.tree-pane {
  display: flex;
  background: #fff;
  border-top: 1px solid #ccc;
}

.phylo path {
  fill: none;
  stroke: #000;
  shape-rendering: crispEdges;
}

.phylo text {
  font: 13px "Liberation Sans", Arial, sans-serif;
  fill: #222;
}

.scroll {
  width: 16px;
  display: flex;
  flex-direction: column;
  align-items: center;
  justify-content: space-between;
  padding: 6px 0 4px;
  background: #f3f2f4;
}

.scroll .thumb {
  flex: 1;
  width: 14px;
  margin: 4px 0 56px;
  background: #cbc9cc;
}

.caption-pane {
  height: 160px;
  display: flex;
  margin-left: 3px;
  border-top: 2px solid #999;
  background: #fff;
}

.caption-tools {
  width: 26px;
  margin: 7px 0 0 8px;
  padding-top: 5px;
  display: flex;
  flex-direction: column;
  align-items: center;
  gap: 8px;
  background: #cfcfd2;
}

.caption {
  flex: 1;
  padding: 9px 13px 0 14px;
  font: 12px/15px "Liberation Sans", Arial, sans-serif;
  color: #222;
}

.caption h1 {
  margin: 0;
  font: bold 15px/18px "Liberation Serif", "Times New Roman", serif;
  color: #000;
}

.caption p {
  margin: 0;
  white-space: nowrap;
  text-align: justify;
  text-align-last: justify;
}

.scroll.short-thumb {
  justify-content: flex-start;
}

.scroll.short-thumb .thumb {
  flex: none;
  height: 61px;
  margin-bottom: 0;
}

/* stream watermark and pointer */

.watermark {
  position: absolute;
  right: 0;
  top: 24px;
  width: 42px;
  overflow: hidden;
  color: #c9d0dd;
  white-space: nowrap;
  font-family: "Noto Sans CJK SC", sans-serif;
}

.watermark b,
.watermark em,
.watermark span {
  display: block;
}

.watermark b {
  font-size: 60px;
  line-height: 54px;
}

.watermark em {
  height: 26px;
  margin: 1px 0 0 2px;
  padding-left: 19px;
  border-radius: 3px;
  background: #c5ccda;
  color: #0b1d3a;
  font-size: 20px;
  font-weight: bold;
  line-height: 26px;
}

.watermark span {
  padding-left: 11px;
  font: 18px/30px "Noto Sans", sans-serif;
  color: #d5d8df;
  text-shadow: 0 0 2px #777;
}

.pointer {
  position: absolute;
  left: 1104px;
  top: 114px;
}

/* taskbar */

.taskbar {
  height: 40px;
  flex: none;
  display: flex;
  background: linear-gradient(90deg, #cfd5e2, #d6dae4 30%, #ebebed 46%, #e4e5ea 65%, #d3d7e4);
}

.search {
  width: 344px;
  margin: 1px 0 1px -49px;
  padding-left: 40px;
  background: #fff;
  font-size: 14px;
}

.search::placeholder {
  color: #444;
  opacity: 1;
}

.task {
  position: relative;
  width: 49px;
  flex: none;
}

.task.open::after {
  content: "";
  position: absolute;
  left: 5px;
  right: 5px;
  bottom: 0;
  height: 3px;
  background: #2a70b0;
}

.task.active {
  background: #f8f8f9;
}

.task.active::after {
  left: 0;
  right: 0;
}

.tray {
  margin-left: auto;
  display: flex;
  align-items: center;
  gap: 10px;
}

.ime {
  font-size: 14px;
  color: #444;
}

.clock {
  width: 23px;
  margin-left: 7px;
  overflow: hidden;
  display: flex;
  flex-direction: column;
  white-space: nowrap;
  line-height: 19px;
  font-size: 12px;
}

.clock span:first-child {
  padding-left: 13px;
}
```
